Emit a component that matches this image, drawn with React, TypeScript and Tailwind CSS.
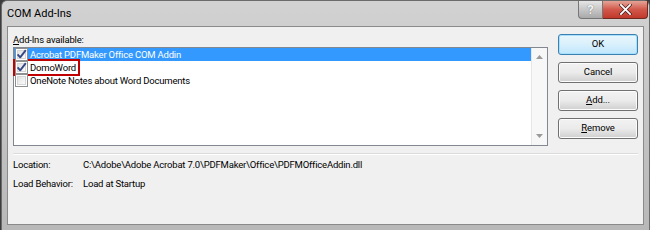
import React from 'react'

const FONT = "font-['Roboto','Noto_Sans',sans-serif]"

function CheckBox({ checked }: { checked: boolean }) {
  return (
    <span className="relative flex h-[13px] w-[13px] shrink-0 items-center justify-center border border-[#8e8f8f] bg-white">
      <span className="h-[9px] w-[9px] border border-[#d6d6d6] bg-gradient-to-br from-[#e2e2e2] to-[#fbfbfb]" />
      {checked && (
        <svg viewBox="0 0 13 13" className="absolute -left-px -top-px h-[13px] w-[13px]">
          <path d="M2.6 6.4 L5.2 9.3 L10.8 2.2" fill="none" stroke="#34488a" strokeWidth="1.9" strokeLinejoin="round" />
        </svg>
      )}
    </span>
  )
}

function ListRow({
  label,
  checked,
  selected,
  marked,
}: {
  label: string
  checked: boolean
  selected?: boolean
  marked?: boolean
}) {
  return (
    <div className={`flex h-[13px] items-center pl-[1px] ${selected ? 'bg-[#3399ff] text-white' : 'text-black'}`}>
      <span className={`flex h-[13px] items-center gap-[2px] pr-[2px] ${marked ? 'outline outline-2 outline-[#c00000]' : ''}`}>
        <CheckBox checked={checked} />
        <span className="whitespace-nowrap text-[9.5px] leading-[13px] tracking-[-0.2px]">{label}</span>
      </span>
    </div>
  )
}

function DialogButton({ children, isDefault }: { children: React.ReactNode; isDefault?: boolean }) {
  return (
    <div
      className={`flex h-[21px] w-[80px] items-center justify-center rounded-[3px] border text-[9.5px] tracking-[-0.1px] text-black ${
        isDefault
          ? 'border-[#3c7fb1] bg-gradient-to-b from-[#eaf6fd] via-[#d9f0fc] to-[#bee6fd] shadow-[inset_0_0_0_1px_#a6e0fb]'
          : 'border-[#707070] bg-gradient-to-b from-[#f2f2f2] via-[#ebebeb] to-[#cfcfcf] shadow-[inset_0_0_0_1px_#fcfcfc]'
      }`}
    >
      {children}
    </div>
  )
}

export default function App() {
  return (
    <div className={`h-[230px] w-[650px] overflow-hidden bg-[#3d3d3d] ${FONT}`}>
      <div className="ml-[1px] flex h-[230px] flex-col rounded-t-[6px] border border-b-0 border-[#6b6b6b] bg-gradient-to-b from-[#d2d2d2] via-[#c4c4c4] to-[#b8b8b8]">
        {/* title bar */}
        <div className="flex h-[25px] items-start justify-between">
          <span className="pl-[5px] pt-[6px] text-[11px] leading-[14px] text-black">COM Add-Ins</span>
          <div className="mr-[1px] flex">
            <div className="flex h-[18px] w-[25px] items-center justify-center rounded-bl-[4px] border border-t-0 border-[#767676] bg-gradient-to-b from-[#e6e6e6] to-[#a9a9a9] text-[13px] font-bold leading-none text-[#f4f4f4] [text-shadow:0_0_1px_#555]">
              ?
            </div>
            <div className="flex h-[18px] w-[45px] items-center justify-center rounded-br-[4px] border border-l-0 border-t-0 border-[#6e2a22] bg-gradient-to-b from-[#e3a497] via-[#d1574a] to-[#c0392b]">
              <svg viewBox="0 0 14 12" className="h-[11px] w-[13px]">
                <path d="M2 1 L12 11 M12 1 L2 11" stroke="#3a1510" strokeWidth="3.4" strokeLinecap="square" />
                <path d="M2 1 L12 11 M12 1 L2 11" stroke="#ffffff" strokeWidth="2" strokeLinecap="square" />
              </svg>
            </div>
          </div>
        </div>

        {/* client area */}
        <div className="mx-[5px] flex h-[199px] flex-col border border-[#8a8a8a] bg-[#f0f0f0] px-[5px] pt-[6px]">
          <div className="flex gap-[10px]">
            <div className="flex flex-1 flex-col">
              <span className="text-[9.5px] leading-[13px] tracking-[-0.2px] text-black">
                <span className="underline">A</span>dd-Ins available:
              </span>
              <div className="mt-[1px] flex h-[99px] border border-[#828790] bg-white">
                <div className="flex flex-1 flex-col">
                  <ListRow label="Acrobat PDFMaker Office COM Addin" checked selected />
                  <ListRow label="DomoWord" checked marked />
                  <ListRow label="OneNote Notes about Word Documents" checked={false} />
                </div>
                <div className="flex w-[16px] flex-col items-center justify-between border-l border-[#e6e6e6] bg-[#f7f7f7] py-[7px]">
                  <svg viewBox="0 0 7 4" className="h-[4px] w-[7px]">
                    <path d="M0 4 L3.5 0 L7 4 Z" fill="#9a9a9a" />
                  </svg>
                  <svg viewBox="0 0 7 4" className="h-[4px] w-[7px]">
                    <path d="M0 0 L7 0 L3.5 4 Z" fill="#9a9a9a" />
                  </svg>
                </div>
              </div>
            </div>
            <div className="flex flex-col gap-[7px] pt-px">
              <DialogButton isDefault>OK</DialogButton>
              <DialogButton>Cancel</DialogButton>
              <DialogButton>
                <span className="underline">A</span>dd...
              </DialogButton>
              <DialogButton>
                <span className="underline">R</span>emove
              </DialogButton>
            </div>
          </div>

          <div className="mt-[7px] border-b border-t border-b-white border-t-[#dcdcdc]" />

          <div className="mt-[3px] flex flex-col gap-[6px] text-[9.5px] leading-[13px] tracking-[-0.2px] text-black">
            <div className="flex">
              <span className="w-[70px] shrink-0">Location:</span>
              <span>C:\Adobe\Adobe Acrobat 7.0\PDFMaker\Office\PDFMOfficeAddin.dll</span>
            </div>
            <div className="flex">
              <span className="w-[70px] shrink-0">Load Behavior:</span>
              <span>Load at Startup</span>
            </div>
          </div>
        </div>
      </div>
    </div>
  )
}
